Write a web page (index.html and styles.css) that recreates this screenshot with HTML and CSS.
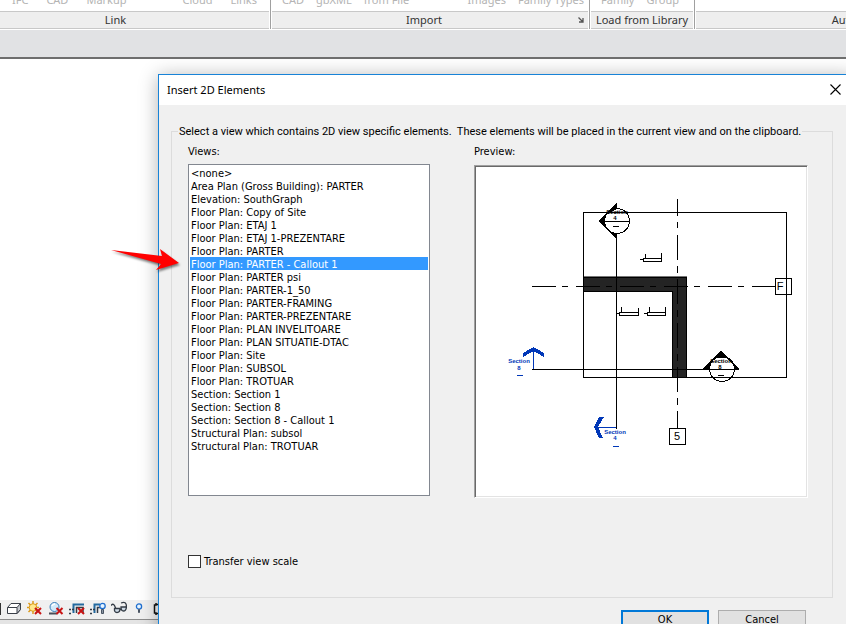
FILE: index.html
```html
<!DOCTYPE html>
<html lang="en">
<head>
    <meta charset="UTF-8">
    <meta name="viewport" content="width=device-width, initial-scale=1.0">
    <title>Insert 2D Elements</title>
    <link rel="stylesheet" href="styles.css">
</head>
<body>

<header class="ribbon">
    <section class="panel panel-link">
        <div class="panel-tools">
            <span>IFC</span>
            <span>CAD</span>
            <span>Markup</span>
            <span class="push">Cloud</span>
            <span>Links</span>
        </div>
        <h2 class="panel-title">Link</h2>
    </section>
    <section class="panel panel-import">
        <div class="panel-tools">
            <span>CAD</span>
            <span>gbXML</span>
            <span>from File</span>
            <span class="push">Images</span>
            <span>Family Types</span>
        </div>
        <h2 class="panel-title">Import</h2>
        <button class="launcher" type="button" aria-label="Import options">
            <svg width="6" height="6" viewBox="0 0 6 6"><path d="M0.5 0.5L4.5 4.5M5 1V5H1" fill="none" stroke="#555" stroke-width="1.3"/></svg>
        </button>
    </section>
    <section class="panel panel-load">
        <div class="panel-tools">
            <span>Family</span>
            <span>Group</span>
        </div>
        <h2 class="panel-title">Load from Library</h2>
    </section>
    <section class="panel panel-auto">
        <div class="panel-tools"></div>
        <h2 class="panel-title">Autodesk</h2>
    </section>
</header>

<div class="options-bar"></div>

<main class="workspace">
    <div class="canvas"></div>

    <!-- View control bar -->
    <div class="view-bar">
        <svg class="edge" width="1" height="14" viewBox="0 0 1 14"><path d="M0 1h1v12H0z" fill="#333"/></svg>
        <button type="button" aria-label="Visual style">
            <svg width="16" height="16" viewBox="0 0 16 16">
                <path d="M1.500 6.500L5 2.500h9.500v6L11 12.500H1.500z" fill="#fff" stroke="#3a3f48"/>
                <path d="M11 6.500L14.500 2.500v6L11 12.500z" fill="#c4c8ce" stroke="#3a3f48"/>
                <path d="M1.500 6.500H11" stroke="#3a3f48"/>
            </svg>
        </button>
        <button type="button" aria-label="Sun path off">
            <svg width="16" height="16" viewBox="0 0 16 16">
                <path d="M6 0v13M0 6.500h12M1.500 2l9 9M10.500 2l-9 9" stroke="#dc9a1c" stroke-width="1.500"/>
                <circle cx="6" cy="6.500" r="3.800" fill="#ffe98c" stroke="#dc9a1c"/>
                <path d="M8 7l6 6M14 7l-6 6" stroke="#c81414" stroke-width="2"/>
            </svg>
        </button>
        <button type="button" aria-label="Shadows off">
            <svg width="16" height="16" viewBox="0 0 16 16">
                <path d="M1 12.500h8" stroke="#4a4f58" stroke-width="2"/>
                <circle cx="6.500" cy="6" r="4.500" fill="#d3ebfb" stroke="#3b7fb8"/>
                <path d="M4 5a3 3 0 0 1 3-2" fill="none" stroke="#fff" stroke-width="1.500"/>
                <path d="M8.500 7l6 6M14.500 7l-6 6" stroke="#c81414" stroke-width="2"/>
            </svg>
        </button>
        <button type="button" aria-label="Crop view off">
            <svg width="16" height="16" viewBox="0 0 16 16">
                <path d="M4.500 12V3.500H15" fill="none" stroke="#23699e" stroke-width="2"/>
                <path d="M0 8.500h2M3 8.500h2M0 12.500h2M7.500 12V6.500H14V12" fill="none" stroke="#333b45" stroke-width="1.500"/>
                <path d="M9 7l6 6M15 7l-6 6" stroke="#c81414" stroke-width="2"/>
            </svg>
        </button>
        <button type="button" aria-label="Show crop region">
            <svg width="16" height="16" viewBox="0 0 16 16">
                <path d="M4.500 12V3.500H10" fill="none" stroke="#23699e" stroke-width="2"/>
                <path d="M0 8.500h2M3 8.500h2M0 12.500h2M7.500 12V6.500H10" fill="none" stroke="#333b45" stroke-width="1.500"/>
                <circle cx="12.500" cy="5" r="2.700" fill="#e6f4ff" stroke="#1f6fd0" stroke-width="1.300"/>
                <path d="M11.500 8.500h2v4h-2z" fill="#8a95a3" stroke="#4a5563"/>
            </svg>
        </button>
        <button type="button" aria-label="Temporary hide or isolate">
            <svg width="16" height="16" viewBox="0 0 16 16">
                <path d="M0 4.500q2-2.500 3.500 0L5 8M8.500 9l2.500-1.500M10 2q4-1.500 5 1t-0.500 4" fill="none" stroke="#333b45" stroke-width="1.300"/>
                <path d="M3.500 7.500h5.500q0 4-3 4t-2.500-4z" fill="#cfdbe6" stroke="#333b45" stroke-width="1.300"/>
                <path d="M10 6h5.500q-0.500 4-3 4t-2.500-4z" fill="#cfdbe6" stroke="#333b45" stroke-width="1.300"/>
            </svg>
        </button>
        <button type="button" aria-label="Reveal hidden elements">
            <svg width="16" height="16" viewBox="0 0 16 16">
                <circle cx="7" cy="5.500" r="2.600" fill="#e6f4ff" stroke="#1f6fd0" stroke-width="1.300"/>
                <path d="M6.500 8.500h1v3h-1z" fill="#8a95a3" stroke="#4a5563"/>
            </svg>
        </button>
        <button type="button" aria-label="View properties">
            <svg width="16" height="16" viewBox="0 0 16 16">
                <path d="M3 2v2H1.500v8H3v2M3 3.500h12M3 12.500h12" fill="none" stroke="#111" stroke-width="1.500"/>
            </svg>
        </button>
    </div>
    <div class="status-bar"></div>

    <!-- Dialog -->
    <div class="dialog" role="dialog" aria-labelledby="dialogTitle">
        <div class="dialog-title">
            <h1 id="dialogTitle">Insert 2D Elements</h1>
            <button class="close-btn" type="button" aria-label="Close">
                <svg width="11" height="11" viewBox="0 0 11 11"><path d="M0.500 0.500l10 10M10.500 0.500l-10 10" stroke="#000" stroke-width="1.100"/></svg>
            </button>
        </div>

        <form class="dialog-form">
            <fieldset>
                <legend>Select a view which contains 2D view specific elements.&nbsp; These elements will be placed in the current view and on the clipboard.</legend>
                <div class="columns">
                    <div class="column">
                        <label class="views-label" for="views">Views:</label>
                        <select id="views" class="views" size="25">
                            <option>&lt;none&gt;</option>
                            <option>Area Plan (Gross Building): PARTER</option>
                            <option>Elevation: SouthGraph</option>
                            <option>Floor Plan: Copy of Site</option>
                            <option>Floor Plan: ETAJ 1</option>
                            <option>Floor Plan: ETAJ 1-PREZENTARE</option>
                            <option>Floor Plan: PARTER</option>
                            <option selected>Floor Plan: PARTER - Callout 1</option>
                            <option>Floor Plan: PARTER psi</option>
                            <option>Floor Plan: PARTER-1_50</option>
                            <option>Floor Plan: PARTER-FRAMING</option>
                            <option>Floor Plan: PARTER-PREZENTARE</option>
                            <option>Floor Plan: PLAN INVELITOARE</option>
                            <option>Floor Plan: PLAN SITUATIE-DTAC</option>
                            <option>Floor Plan: Site</option>
                            <option>Floor Plan: SUBSOL</option>
                            <option>Floor Plan: TROTUAR</option>
                            <option>Section: Section 1</option>
                            <option>Section: Section 8</option>
                            <option>Section: Section 8 - Callout 1</option>
                            <option>Structural Plan: subsol</option>
                            <option>Structural Plan: TROTUAR</option>
                        </select>
                    </div>
                    <div class="column">
                        <span class="preview-label">Preview:</span>
                        <div class="preview">
                            <svg viewBox="476 167 330 329" width="330" height="329" shape-rendering="crispEdges">
                                <!-- walls -->
                                <path d="M583 277H687V378H672V292H583z" fill="#242424"/>
                                <path d="M583 276.500H687" stroke="#777"/>
                                <path d="M583 277.500H686.500V377.500M583 291.500H672.500V377.500" fill="none" stroke="#000"/>
                                <!-- crop region -->
                                <rect x="583.500" y="212.500" width="203" height="165" fill="none" stroke="#000"/>
                                <!-- grid lines -->
                                <path d="M532 286.500H775" stroke="#000" stroke-dasharray="24 6 6 8"/>
                                <path d="M677.500 199V428" stroke="#000" stroke-dasharray="17 6 6 7 25 6 7 6 25 6 7 6 25 6 7 6 25 6 7 6"/>
                                <rect x="775.500" y="278.500" width="16" height="16" fill="none" stroke="#000"/>
                                <rect x="669.500" y="428.500" width="16" height="16" fill="#fff" stroke="#000"/>
                                <text class="bubble" x="780" y="290" text-anchor="middle">F</text>
                                <text class="bubble" x="677" y="440" text-anchor="middle">5</text>
                                <!-- section lines -->
                                <path d="M616.500 238V429M532 369.500H703" fill="none" stroke="#000"/>
                                <!-- furniture -->
                                <g fill="none" stroke="#000">
                                    <path d="M640 259.500H643M643 258.500H662M643 261.500H662M645.500 254V258M661.500 253V262M643.500 259V261"/>
                                    <path d="M617 313.500H620M619 312.500H639M619 315.500H639M621.500 307V312M638.500 308V315M619.500 313V315"/>
                                    <path d="M644 313.500H647M647 312.500H666M647 315.500H666M649.500 307V312M665.500 307V315M647.500 313V315"/>
                                </g>
                                <!-- section heads -->
                                <path d="M617 203V210L606 221L617 232V239L598 221z" fill="#000"/>
                                <circle cx="617" cy="221" r="12.500" fill="#fff" stroke="#000"/>
                                <path d="M598 221L605 214V228zM608 214L617 203V209z" fill="#000"/>
                                <path d="M604 221.500H630M583 212.500H630M613 226.500H619" stroke="#000"/>
                                <text class="tag" x="617" y="214" text-anchor="middle">Section</text>
                                <text class="tag" x="615" y="220" text-anchor="middle">4</text>

                                <circle cx="722" cy="369" r="12.500" fill="#fff" stroke="#000"/>
                                <path d="M703 370L710 363V370zM739 370L734 364V370zM721 351L729 358H713z" fill="#000"/>
                                <path d="M703 369.500H739M687 377.500H740M718 375.500H724M703 369.500L721 351.500L739 369.500" fill="none" stroke="#000"/>
                                <text class="tag" x="721" y="363" text-anchor="middle">Section</text>
                                <text class="tag" x="720" y="369" text-anchor="middle">8</text>

                                <g fill="#0037b8">
                                    <path d="M523 353L533.500 347L544 353V357L533.500 351L523 357z"/>
                                    <path d="M533 350h1v19h-1zM517 375h6v1h-6z"/>
                                    <text class="tag" x="519" y="363" text-anchor="middle">Section</text>
                                    <text class="tag" x="519" y="370" text-anchor="middle">8</text>
                                    <path d="M599 417H604L598 427L603 438H599L594 427z"/>
                                    <path d="M597 427h19v1h-19zM613 446h6v1h-6z"/>
                                    <text class="tag" x="615" y="434" text-anchor="middle">Section</text>
                                    <text class="tag" x="615" y="440" text-anchor="middle">4</text>
                                </g>
                            </svg>
                        </div>
                    </div>
                </div>
                <label class="check">
                    <input type="checkbox" name="transferScale">
                    Transfer view scale
                </label>
            </fieldset>
            <div class="actions">
                <button class="btn btn-primary" type="button">OK</button>
                <button class="btn" type="button">Cancel</button>
            </div>
        </form>
    </div>

    <!-- Red pointer to the selected view -->
    <svg class="pointer" width="76" height="30" viewBox="0 0 76 30">
        <path d="M1 3L52 9L50 2L69 16L46 23L51 17z" fill="#f00"/>
    </svg>
</main>

</body>
</html>
```
FILE: styles.css
```css
* {
    margin: 0;
    padding: 0;
    box-sizing: border-box;
}

body {
    height: 100vh;
    display: flex;
    flex-direction: column;
    overflow: hidden;
    background: #fff;
    color: #000;
    font-family: Tahoma, "DejaVu Sans Condensed", sans-serif;
    font-size: 11px;
}

button {
    border: none;
    background: none;
    font: inherit;
}

svg {
    display: block;
}

/* Ribbon */
.ribbon {
    display: flex;
    height: 30px;
    flex-shrink: 0;
    overflow: hidden;
    font-family: "Segoe UI", "Noto Sans", sans-serif;
    background: #fff;
}

.panel {
    position: relative;
    display: flex;
    flex-direction: column;
    height: 29px;
    flex-shrink: 0;
    padding-right: 1px;
    border-right: 1px solid #a0a0a0;
    margin-right: 1px;
}

.panel-link {
    width: 271px;
}

.panel-import {
    width: 318px;
}

.panel-load {
    width: 104px;
}

.panel-auto {
    width: 322px;
}

.panel-tools {
    display: flex;
    align-items: flex-end;
    gap: 18px;
    height: 11px;
    padding: 0 12px 3px;
    color: #b4b4b4;
    line-height: 16px;
    white-space: nowrap;
}

.panel-import .panel-tools {
    gap: 12px;
    padding: 0 4px 3px 10px;
}

.panel-load .panel-tools {
    gap: 12px;
    padding: 0 10px 3px;
}

.push {
    margin-left: auto;
}

.panel-title {
    height: 18px;
    border-top: 1px solid #c8c8c8;
    border-bottom: 1px solid #c8c8c8;
    background: #eee;
    color: #333;
    font-size: 11px;
    font-weight: normal;
    line-height: 16px;
    text-align: center;
    white-space: nowrap;
}

.panel-link .panel-title {
    padding-right: 38px;
}

.panel-import .panel-title {
    padding-right: 12px;
}

.launcher {
    position: absolute;
    right: 5px;
    bottom: 6px;
}

.options-bar {
    height: 29px;
    flex-shrink: 0;
    background: #e1e2e4;
    border-bottom: 2px solid #6e6e6e;
}

/* Drawing area */
.workspace {
    position: relative;
    flex: 1;
    display: flex;
    flex-direction: column;
    overflow: hidden;
}

.canvas {
    flex: 1;
}

.view-bar {
    display: flex;
    align-items: center;
    gap: 5px;
    height: 19px;
    padding-bottom: 1px;
    background: #f0f0f0;
}

.status-bar {
    height: 5px;
    background: #e4e4e4;
    border-top: 1px solid #8c8c8c;
}

/* Dialog window */
.dialog {
    position: absolute;
    top: 15px;
    left: 158px;
    right: -8px;
    border: 1px solid #1883d7;
    background: #f0f0f0;
    box-shadow: 0 2px 18px rgba(0, 0, 0, 0.3);
}

.dialog-title {
    display: flex;
    justify-content: space-between;
    align-items: center;
    height: 30px;
    padding: 0 12px 2px 8px;
    background: #fff;
}

.dialog-title h1 {
    font-family: "Segoe UI", "Noto Sans", sans-serif;
    font-size: 11px;
    font-weight: normal;
}

.dialog-form {
    padding: 19px 20px 12px 12px;
}

fieldset {
    min-width: 0;
    padding: 0 16px 28px;
    border: 1px solid #dcdcdc;
}

legend {
    margin-left: -10px;
    padding: 0 1px;
    font-family: Tahoma, Roboto, sans-serif;
    line-height: 15px;
    white-space: nowrap;
}

.columns {
    display: flex;
    gap: 44px;
    padding-top: 5px;
}

.views-label,
.preview-label {
    display: block;
    height: 20px;
    line-height: 16px;
}

.preview-label {
    height: 21px;
}

.views {
    display: block;
    width: 242px;
    height: 332px;
    padding: 1px;
    border: 1px solid #828790;
    border-radius: 0;
    background: #fff;
    color: #000;
    font: inherit;
    outline: none;
    overflow: hidden;
}

.views option {
    height: 13px;
    min-height: 13px;
    padding: 1px 1px 0;
    line-height: 13px;
}

.views option:checked {
    background: #3399ff linear-gradient(#3399ff, #3399ff);
    color: #fff;
}

.preview {
    padding: 1px;
    border: 1px solid;
    border-color: #a0a0a0 #fff #fff #a0a0a0;
    background: #fff;
    box-shadow: inset 1px 1px 0 #696969, inset -1px -1px 0 #e3e3e3;
}

.bubble {
    font-family: "Liberation Sans", sans-serif;
    font-size: 11px;
}

.tag {
    font-family: "Liberation Sans", sans-serif;
    font-size: 6px;
    font-weight: bold;
}

.check {
    display: flex;
    align-items: center;
    gap: 3px;
    margin-top: 56px;
    line-height: 15px;
}

.check input {
    appearance: none;
    width: 13px;
    height: 13px;
    border: 1px solid #333;
    background: #fff;
}

.check input:checked {
    background: #0078d7;
}

.actions {
    display: flex;
    justify-content: flex-end;
    gap: 9px;
    padding: 12px 27px 0 0;
}

.btn {
    width: 88px;
    height: 22px;
    padding-bottom: 3px;
    border: 1px solid #adadad;
    background: #e1e1e1;
}

.btn-primary {
    border: 2px solid #0078d7;
}

.pointer {
    position: absolute;
    top: 188px;
    left: 110px;
    filter: drop-shadow(1px 2px 1px rgba(0, 0, 0, 0.5));
}
```
